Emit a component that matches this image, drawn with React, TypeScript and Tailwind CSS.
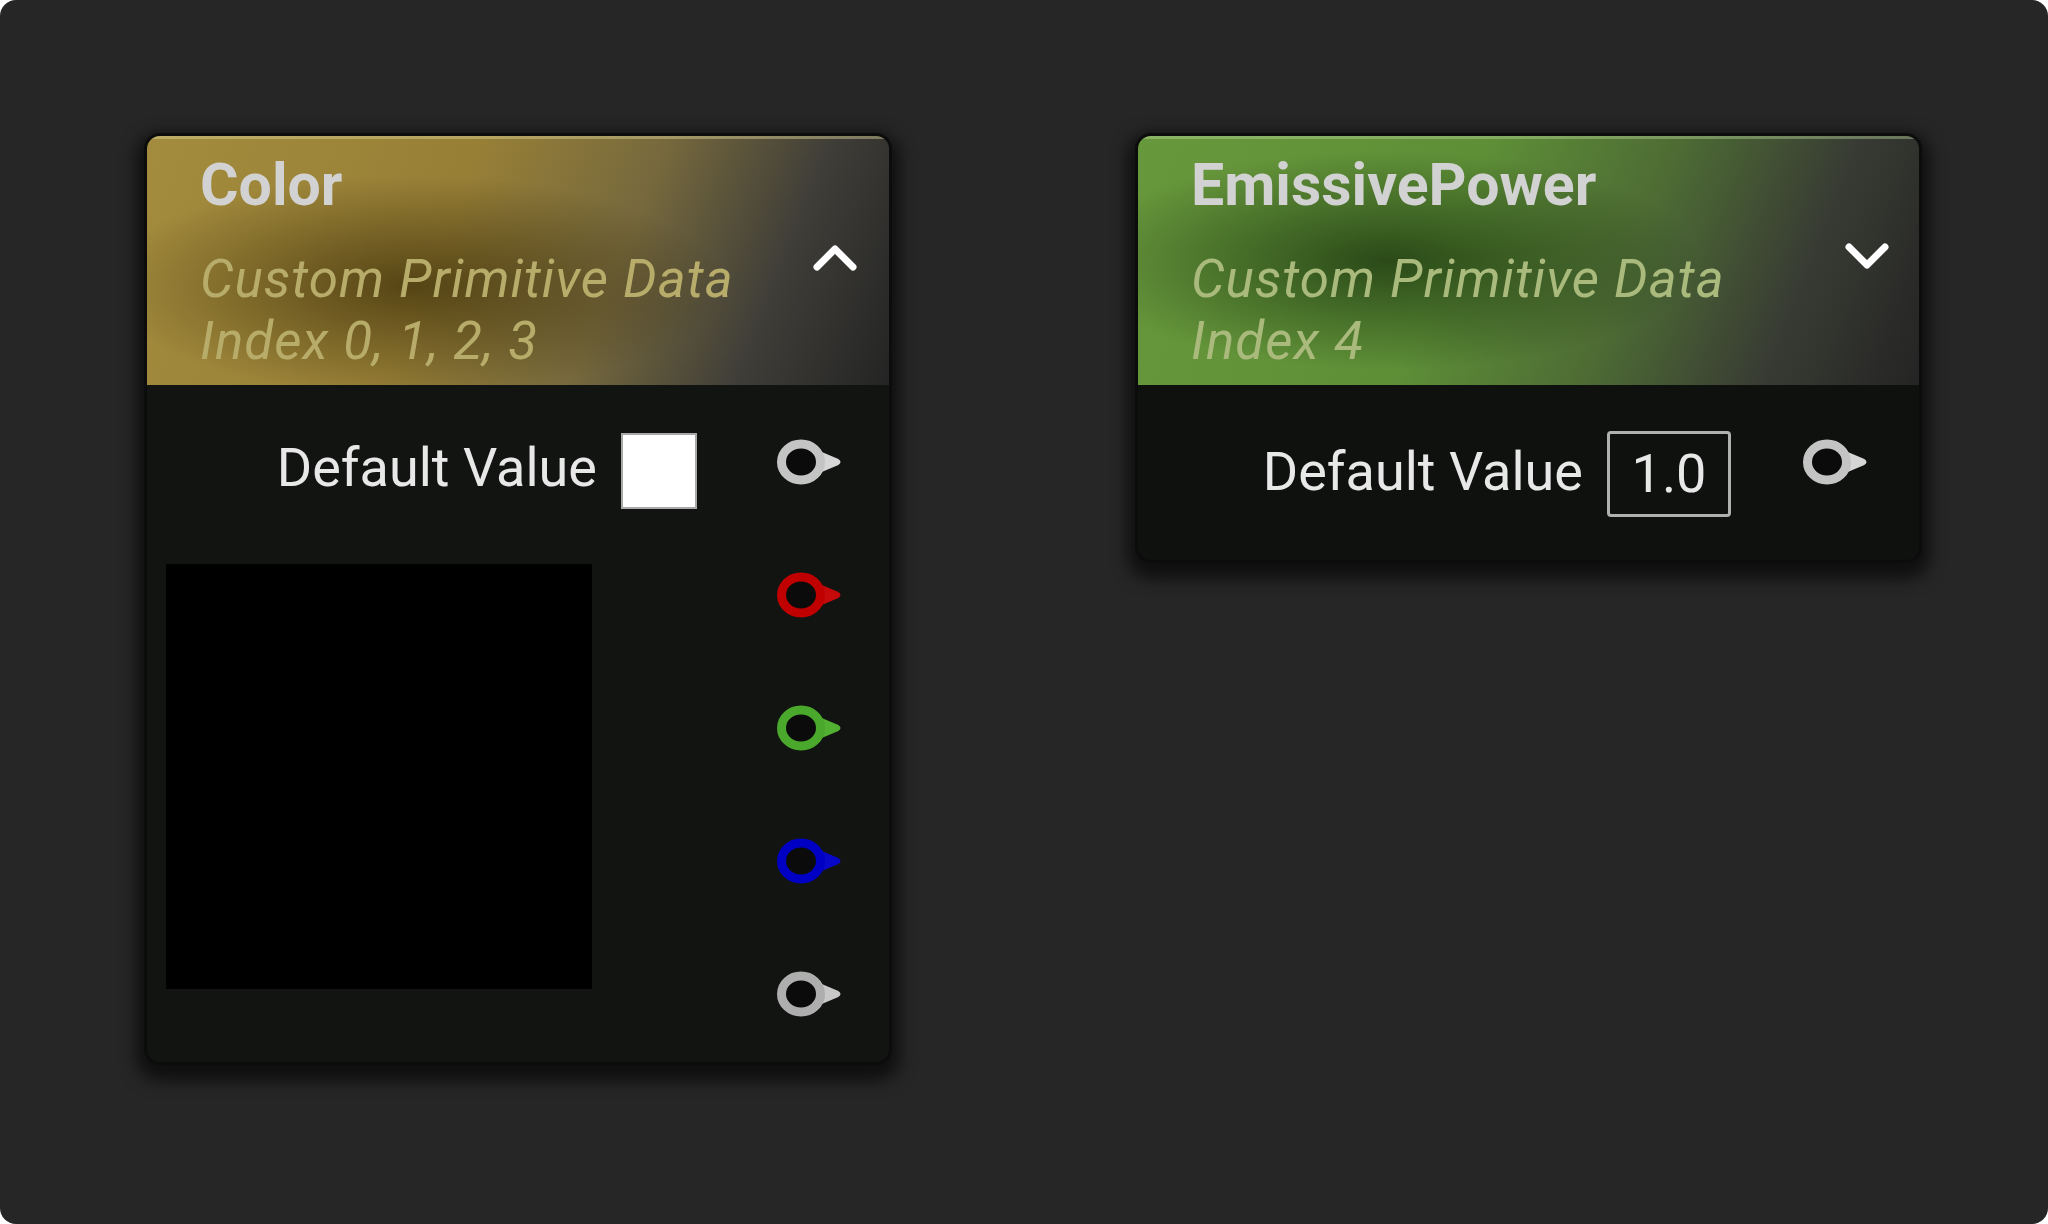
import React from 'react';

type PinProps = { ring: string; arrow: string };

// output pin: thick ring with a small rounded arrow tab on the right
const Pin: React.FC<PinProps> = ({ ring, arrow }) => (
    <svg width="68" height="48" viewBox="0 0 68 48" className="block">
        <path d="M42,14 L61,22 Q64,24 61,26 L42,34 Z" fill={arrow} stroke={arrow} strokeWidth="2" strokeLinejoin="round" />
        <ellipse cx="24" cy="24" rx="19.5" ry="18" fill="#0a0b0a" stroke={ring} strokeWidth="9" />
    </svg>
);

const Chevron: React.FC<{ up?: boolean }> = ({ up }) => (
    <svg width="46" height="30" viewBox="0 0 46 30" className="block">
        <polyline
            points={up ? '5,25 23,7 41,25' : '5,5 23,23 41,5'}
            fill="none"
            stroke="#ffffff"
            strokeWidth="7"
            strokeLinecap="round"
            strokeLinejoin="round"
        />
    </svg>
);

const App: React.FC = () => {
    return (
        <div className="w-[2048px] h-[1224px] bg-white" style={{ fontFamily: 'Roboto, "Noto Sans", sans-serif' }}>
            <div className="w-full h-full rounded-[16px] bg-[#262626] flex items-start pl-[144px] pt-[133px] gap-[243px]">
                {/* Color node */}
                <div className="w-[748px] rounded-[16px] border-[3px] border-[#0c0c0c] overflow-hidden bg-[#121412] shadow-[0_8px_16px_8px_rgba(0,0,0,0.6)]">
                    <div className="h-[249px] flex items-center pl-[53px] pr-[31px] shadow-[inset_0_3px_0_rgba(220,210,150,0.45)] bg-[radial-gradient(ellipse_42%_44%_at_36%_60%,rgba(45,32,0,0.62),transparent),linear-gradient(112deg,#a38c3d_0%,#977f36_40%,#76693d_62%,#3e3d38_82%,#242424_100%)]">
                        <div className="flex-1 pt-[4px]">
                            <div className="text-[59px] leading-[64px] font-bold text-[#d2d2d2]">Color</div>
                            <div className="mt-[31px] text-[53px] leading-[62px] tracking-[1px] italic text-[#b8ac6a]">
                                Custom Primitive Data
                                <br />
                                Index 0, 1, 2, 3
                            </div>
                        </div>
                        <div className="mb-[8px]">
                            <Chevron up />
                        </div>
                    </div>

                    <div className="pt-[10px] pb-[2px]">
                        {/* Default value row */}
                        <div className="h-[133px] flex items-center justify-end pr-[44px]">
                            <span className="mt-[11px] text-[54px] text-[#e8e8e8]">Default Value</span>
                            <div className="ml-[24px] mt-[18px] w-[76px] h-[76px] bg-white border-2 border-[#a8a8a8]" />
                            <div className="ml-[80px]">
                                <Pin ring="#c4c4c4" arrow="#d6d6d6" />
                            </div>
                        </div>

                        {/* Preview + channel pins */}
                        <div className="flex">
                            <div className="ml-[19px] mt-[36px] w-[426px] h-[425px] bg-black" />
                            <div className="ml-auto pr-[44px] flex flex-col">
                                <div className="h-[133px] flex items-center">
                                    <Pin ring="#c00000" arrow="#c40a0a" />
                                </div>
                                <div className="h-[133px] flex items-center">
                                    <Pin ring="#4aa82c" arrow="#52b032" />
                                </div>
                                <div className="h-[133px] flex items-center">
                                    <Pin ring="#0000c4" arrow="#0808c8" />
                                </div>
                                <div className="h-[133px] flex items-center">
                                    <Pin ring="#aeaeae" arrow="#c8c8c8" />
                                </div>
                            </div>
                        </div>
                    </div>
                </div>

                {/* EmissivePower node */}
                <div className="w-[787px] rounded-[16px] border-[3px] border-[#0c0c0c] overflow-hidden bg-[#0f110f] shadow-[0_8px_16px_8px_rgba(0,0,0,0.6)]">
                    <div className="h-[249px] flex items-center pl-[53px] pr-[29px] shadow-[inset_0_3px_0_rgba(190,220,160,0.4)] bg-[radial-gradient(ellipse_40%_44%_at_32%_50%,rgba(10,30,5,0.62),transparent),linear-gradient(112deg,#68983c_0%,#5e8f37_40%,#4d6b34_62%,#383b33_82%,#242424_100%)]">
                        <div className="flex-1 pt-[4px]">
                            <div className="text-[59px] leading-[64px] font-bold text-[#d2d2d2]">EmissivePower</div>
                            <div className="mt-[31px] text-[53px] leading-[62px] tracking-[1px] italic text-[#a9ba7c]">
                                Custom Primitive Data
                                <br />
                                Index 4
                            </div>
                        </div>
                        <div className="mb-[8px]">
                            <Chevron />
                        </div>
                    </div>

                    <div className="pt-[10px] pb-[32px]">
                        <div className="h-[133px] flex items-center justify-end pr-[48px]">
                            <span className="mt-[19px] text-[54px] text-[#e8e8e8]">Default Value</span>
                            <div className="ml-[24px] mt-[24px] w-[124px] h-[86px] rounded-[4px] border-[3px] border-[#b0b0b0] flex items-center justify-center text-[54px] text-[#e8e8e8]">
                                1.0
                            </div>
                            <div className="ml-[72px]">
                                <Pin ring="#c4c4c4" arrow="#d6d6d6" />
                            </div>
                        </div>
                    </div>
                </div>
            </div>
        </div>
    );
};

export default App;
